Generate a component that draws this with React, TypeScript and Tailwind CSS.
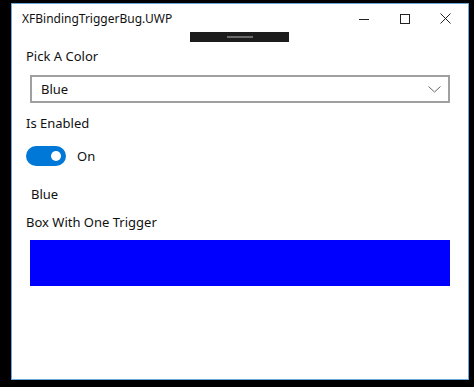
import React from "react";

export default function App() {
  const font = { fontFamily: '"Noto Sans", "Open Sans", sans-serif' };
  return (
    <div className="w-[474px] h-[387px] bg-black pl-[11px] pt-[3px]" style={font}>
      <div className="relative w-[458px] h-[377px] bg-white border border-[#6aa8dc] flex flex-col">
        {/* title bar */}
        <div className="h-[29px] flex items-center justify-between shrink-0">
          <span className="pl-[10px] text-[12px] text-[#111] leading-none">XFBindingTriggerBug.UWP</span>
          <div className="flex h-full items-center pr-[2px]">
            <div className="w-[41px] h-full flex items-center justify-center">
              <svg width="10" height="10" viewBox="0 0 10 10">
                <line x1="0" y1="5.5" x2="10" y2="5.5" stroke="#222" strokeWidth="1" />
              </svg>
            </div>
            <div className="w-[41px] h-full flex items-center justify-center">
              <svg width="10" height="10" viewBox="0 0 10 10">
                <rect x="0.5" y="0.5" width="9" height="9" fill="none" stroke="#222" strokeWidth="1" />
              </svg>
            </div>
            <div className="w-[41px] h-full flex items-center justify-center">
              <svg width="11" height="11" viewBox="0 0 11 11">
                <line x1="0.5" y1="0.5" x2="10.5" y2="10.5" stroke="#222" strokeWidth="1" />
                <line x1="10.5" y1="0.5" x2="0.5" y2="10.5" stroke="#222" strokeWidth="1" />
              </svg>
            </div>
          </div>
        </div>
        {/* debug bar overlay */}
        <div className="absolute left-[178px] top-[28px] w-[99px] h-[10px] bg-[#1c1c1c] flex items-center justify-center">
          <div className="w-[26px] h-[2px] bg-[#6a6a6a]" />
        </div>
        {/* content */}
        <div className="flex flex-col pl-[14px] pr-[18px] text-[13px] text-[#111]">
          <div className="mt-[13px] h-[20px] leading-[20px]">Pick A Color</div>
          <div className="mt-[9px] ml-[4px] h-[28px] border-2 border-[#a0a0a0] flex items-center justify-between pl-[9px] pr-[7px]">
            <span className="leading-[20px]">Blue</span>
            <svg width="13" height="7" viewBox="0 0 13 7">
              <polyline points="0.5,0.5 6.5,6 12.5,0.5" fill="none" stroke="#666" strokeWidth="1" />
            </svg>
          </div>
          <div className="mt-[10px] h-[20px] leading-[20px]">Is Enabled</div>
          <div className="mt-[13px] h-[20px] flex items-center">
            <div className="w-[40px] h-[20px] rounded-full bg-[#0078d7] flex items-center justify-end pr-[5px]">
              <div className="w-[10px] h-[10px] rounded-full bg-white" />
            </div>
            <span className="ml-[11px] leading-[20px]">On</span>
          </div>
          <div className="mt-[18px] ml-[5px] h-[20px] leading-[20px]">Blue</div>
          <div className="mt-[8px] h-[20px] leading-[20px]">Box With One Trigger</div>
          <div className="mt-[8px] ml-[4px] h-[46px] bg-[#0000ff]" />
        </div>
      </div>
    </div>
  );
}
